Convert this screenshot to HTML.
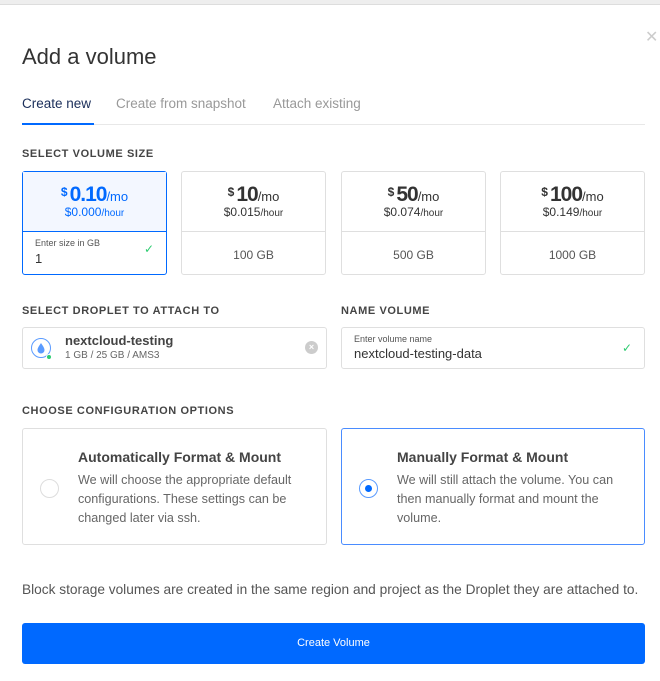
<!DOCTYPE html>
<html><head><style>
*{box-sizing:border-box;margin:0;padding:0}
body{width:660px;height:681px;background:#fff;font-family:"Liberation Sans",sans-serif;color:#333;position:relative;overflow:hidden}
.a{position:absolute}
.lbl{font-size:11px;font-weight:bold;letter-spacing:.6px;color:#444}
.card{position:absolute;top:171px;width:145px;height:104px;border:1px solid #dfdfdf;border-radius:3px;text-align:center}
.card .top{height:60px;border-bottom:1px solid #dfdfdf;padding-top:11px}
.big{font-size:21px;font-weight:bold;letter-spacing:-1px}
.sm{font-size:13px;font-weight:normal;letter-spacing:0}
.cur{font-size:12px;vertical-align:5px;margin-right:2px;letter-spacing:0}
.hr{font-size:12px;margin-top:-2px}
.hr span{font-size:10px}
.gb{font-size:12px;color:#555;padding-top:16px}
.box{position:absolute;border:1px solid #dfdfdf;border-radius:3px}
.opt{position:absolute;top:428px;height:117px;border:1px solid #dfdfdf;border-radius:3px}
.opt h4{position:absolute;left:55px;top:20px;font-size:14px;font-weight:bold;color:#444}
.opt p{position:absolute;left:55px;top:42px;font-size:12.6px;line-height:19px;color:#666;width:230px}
.rad{position:absolute;left:17px;top:50px;width:19px;height:19px;border-radius:50%;border:1px solid #ddd}
</style></head><body>
<div class="a" style="left:0;top:0;width:660px;height:5px;background:#eee;border-bottom:1px solid #ddd"></div>
<div class="a" style="left:645px;top:27px;font-size:16px;color:#ccc">✕</div>
<div class="a" style="left:22px;top:44px;font-size:22px;color:#333">Add a volume</div>
<div class="a" style="left:22px;top:96px;font-size:13.5px;color:#1a2e5a">Create new</div>
<div class="a" style="left:116px;top:96px;font-size:13.5px;color:#999">Create from snapshot</div>
<div class="a" style="left:273px;top:96px;font-size:13.5px;color:#999">Attach existing</div>
<div class="a" style="left:22px;top:124px;width:623px;height:1px;background:#e8e8e8"></div>
<div class="a" style="left:22px;top:123px;width:72px;height:2px;background:#0069ff"></div>
<div class="a lbl" style="left:22px;top:148px">SELECT VOLUME SIZE</div>

<div class="card" style="left:22px;border-color:#0069ff;color:#0069ff">
<div class="top" style="background:#f3f7ff;border-color:#0069ff"><div class="big"><span class="cur">$</span>0.10<span class="sm">/mo</span></div><div class="hr">$0.000<span>/hour</span></div></div>
<div style="text-align:left;padding:6px 0 0 12px;color:#333;position:relative"><div style="font-size:9px;color:#555">Enter size in GB</div><div style="font-size:13px;margin-top:3px">1</div><div style="position:absolute;right:12px;top:10px;color:#2ecc71;font-size:12px">✓</div></div>
</div>
<div class="card" style="left:181px"><div class="top"><div class="big"><span class="cur">$</span>10<span class="sm">/mo</span></div><div class="hr">$0.015<span>/hour</span></div></div><div class="gb">100 GB</div></div>
<div class="card" style="left:341px"><div class="top"><div class="big"><span class="cur">$</span>50<span class="sm">/mo</span></div><div class="hr">$0.074<span>/hour</span></div></div><div class="gb">500 GB</div></div>
<div class="card" style="left:500px"><div class="top"><div class="big"><span class="cur">$</span>100<span class="sm">/mo</span></div><div class="hr">$0.149<span>/hour</span></div></div><div class="gb">1000 GB</div></div>

<div class="a lbl" style="left:22px;top:305px">SELECT DROPLET TO ATTACH TO</div>
<div class="a lbl" style="left:341px;top:305px">NAME VOLUME</div>
<div class="box" style="left:22px;top:327px;width:305px;height:42px">
<div class="a" style="left:8px;top:10px;width:20px;height:20px;border-radius:50%;border:1.5px solid #5a9bff"></div>
<svg class="a" style="left:13px;top:14px" width="10" height="12" viewBox="0 0 10 12"><path d="M5 1 C3 4 1.5 6 1.5 8 A3.5 3.5 0 0 0 8.5 8 C8.5 6 7 4 5 1Z" fill="#5a9bff"/></svg>
<div class="a" style="left:23px;top:26px;width:6px;height:6px;border-radius:50%;background:#2ecc71;border:1px solid #fff"></div>
<div class="a" style="left:42px;top:5px;font-size:13px;font-weight:bold;color:#444">nextcloud-testing</div>
<div class="a" style="left:42px;top:22px;font-size:10px;color:#666">1 GB / 25 GB / AMS3</div>
<div class="a" style="left:282px;top:13px;width:13px;height:13px;border-radius:50%;background:#ccc;color:#fff;font-size:9px;text-align:center;line-height:13px;font-weight:bold">×</div>
</div>
<div class="box" style="left:341px;top:327px;width:304px;height:42px">
<div class="a" style="left:12px;top:6px;font-size:9px;color:#555">Enter volume name</div>
<div class="a" style="left:12px;top:18px;font-size:13px;color:#333">nextcloud-testing-data</div>
<div class="a" style="right:12px;top:13px;color:#2ecc71;font-size:12px">✓</div>
</div>

<div class="a lbl" style="left:22px;top:405px">CHOOSE CONFIGURATION OPTIONS</div>
<div class="opt" style="left:22px;width:305px"><div class="rad"></div><h4>Automatically Format &amp; Mount</h4><p>We will choose the appropriate default configurations. These settings can be changed later via ssh.</p></div>
<div class="opt" style="left:341px;width:304px;border-color:#4a8cff"><div class="rad" style="border-color:#5a9bff;border-width:1.5px"><div style="width:7px;height:7px;border-radius:50%;background:#0069ff;margin:4.5px auto"></div></div><h4>Manually Format &amp; Mount</h4><p style="width:225px">We will still attach the volume. You can then manually format and mount the volume.</p></div>

<div class="a" style="left:22px;top:582px;font-size:13.7px;color:#555;white-space:nowrap">Block storage volumes are created in the same region and project as the Droplet they are attached to.</div>
<div class="a" style="left:22px;top:623px;width:623px;height:41px;background:#0069ff;border-radius:3px;color:#fff;font-size:11px;text-align:center;line-height:41px">Create Volume</div>
</body></html>
